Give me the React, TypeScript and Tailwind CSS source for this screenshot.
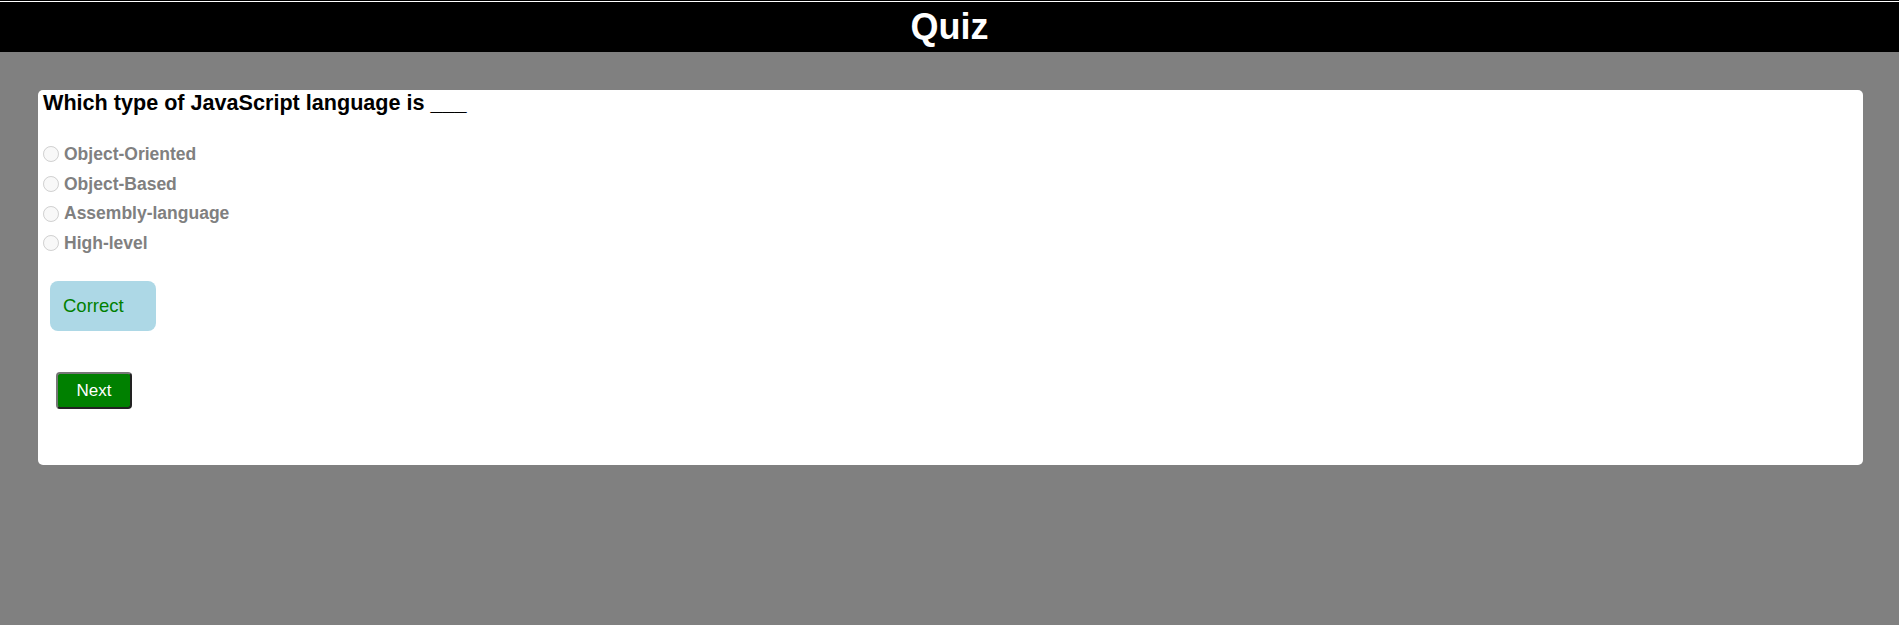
const options = ["Object-Oriented", "Object-Based", "Assembly-language", "High-level"]

function Header() {
  return (
    <header className="bg-black pt-px">
      <div className="h-px bg-white" />
      <div className="h-[50px] flex items-center justify-center">
        <h1 className="text-[36px] leading-[1.15] font-bold text-white font-['Liberation_Sans',sans-serif]">Quiz</h1>
      </div>
    </header>
  )
}

export default function App() {
  return (
    <div className="min-h-screen bg-[#808080] font-['Liberation_Sans',Arial,sans-serif]">
      <Header />
      <main className="ml-[38px] mr-[36px] mt-[38px] bg-white rounded-[5px] pb-[56px]">
        <h2 className="pt-px pl-[5px] text-[21.6px] leading-[1.15] font-bold text-black">
          Which type of JavaScript language is ___
        </h2>
        <ul className="mt-[23.5px] flex flex-col">
          {options.map((opt) => (
            <li key={opt} className="h-[29.7px] flex items-center">
              <input
                type="radio"
                name="answer"
                disabled
                className="ml-[5px] mr-[5px] w-[16px] h-[16px]"
              />
              <label className="text-[17.5px] leading-[1.15] font-bold text-[#808080]">{opt}</label>
            </li>
          ))}
        </ul>
        <div className="mt-[23px] ml-[12px] w-[106px] h-[50px] pl-[13px] flex items-center rounded-[8px] bg-[#add8e6]">
          <span className="text-[18.5px] leading-[1.15] text-[#008000]">Correct</span>
        </div>
        <button className="mt-[41px] ml-[18px] w-[76px] h-[37px] flex items-center justify-center rounded-[4px] bg-[#008000] text-white text-[17px] leading-[1.15] border-2 border-t-[#767676] border-l-[#767676] border-b-[#222] border-r-[#222]">
          Next
        </button>
      </main>
    </div>
  )
}
